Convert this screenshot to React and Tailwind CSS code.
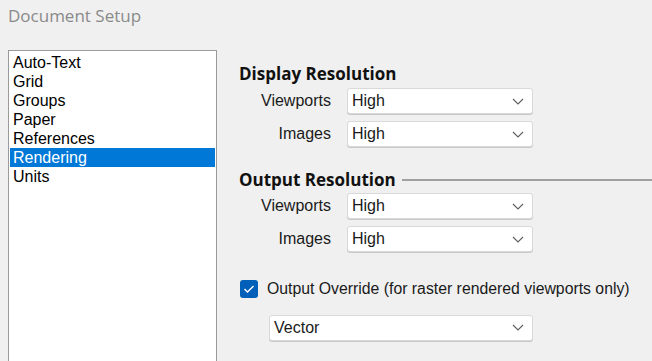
import React from 'react';

const items = ['Auto-Text', 'Grid', 'Groups', 'Paper', 'References', 'Rendering', 'Units'];

function Chevron() {
  return (
    <svg width="12" height="7" viewBox="0 0 12 7" className="mr-[8px]">
      <path d="M1 1 L6 6 L11 1" fill="none" stroke="#606060" strokeWidth="1.2" />
    </svg>
  );
}

function Dropdown({ value, width = 'w-[186px]' }) {
  return (
    <div className={`${width} h-[26px] bg-white border border-[#d9d9d9] rounded-[3px] shadow-[0_1px_0_#c8c8c8] flex items-center justify-between pl-[4px]`}>
      <span className="text-[16px] text-[#1a1a1a]">{value}</span>
      <Chevron />
    </div>
  );
}

function Row({ label, value }) {
  return (
    <div className="flex items-center">
      <div className="w-[92px] text-right text-[16px] text-[#1a1a1a]">{label}</div>
      <div className="ml-[16px]">
        <Dropdown value={value} />
      </div>
    </div>
  );
}

const headFont = { fontFamily: '"Open Sans", "Noto Sans", sans-serif' };

export default function App() {
  return (
    <div className="w-[652px] h-[361px] bg-[#f0f0f0] overflow-hidden flex flex-col" style={{ fontFamily: '"Liberation Sans", Arial, sans-serif' }}>
      {/* title */}
      <div className="h-[50px] shrink-0 pl-[8px] pt-[3px] text-[17px] text-[#8a8a8a]" style={headFont}>
        Document Setup
      </div>

      <div className="flex flex-1">
        {/* category list */}
        <div className="ml-[8px] w-[209px] h-[320px] shrink-0 bg-white border border-[#9a9a9a] pt-[2px] px-[1px]">
          {items.map((item) => (
            <div
              key={item}
              className={`h-[19px] leading-[19px] pl-[3px] text-[16px] ${item === 'Rendering' ? 'bg-[#0078d7] text-white' : 'text-black'}`}
            >
              {item}
            </div>
          ))}
        </div>

        {/* settings panel */}
        <div className="flex-1 pl-[22px]">
          <div className="mt-[14px] h-[20px] leading-[20px] text-[17px] font-bold text-[#111]" style={headFont}>Display Resolution</div>
          <div className="mt-[4px] flex flex-col gap-[7px]">
            <Row label="Viewports" value="High" />
            <Row label="Images" value="High" />
          </div>

          <div className="mt-[23px] h-[20px] flex items-center">
            <span className="text-[17px] font-bold text-[#111] leading-[20px]" style={headFont}>Output Resolution</span>
            <div className="flex-1 h-[2px] bg-[#a0a0a0] ml-[6px]" />
          </div>
          <div className="mt-[3px] flex flex-col gap-[7px]">
            <Row label="Viewports" value="High" />
            <Row label="Images" value="High" />
          </div>

          <div className="mt-[25px] flex items-center ml-[1px]">
            <div className="w-[18px] h-[18px] rounded-[3px] bg-[#005fb8] flex items-center justify-center">
              <svg width="12" height="10" viewBox="0 0 12 10">
                <path d="M1.5 5 L4.5 8 L10.5 2" fill="none" stroke="white" strokeWidth="1.4" />
              </svg>
            </div>
            <span className="ml-[9px] text-[15.8px] text-[#1a1a1a]">Output Override (for raster rendered viewports only)</span>
          </div>

          <div className="mt-[14px] ml-[30px]">
            <Dropdown value="Vector" width="w-[264px]" />
          </div>
        </div>
      </div>
    </div>
  );
}
